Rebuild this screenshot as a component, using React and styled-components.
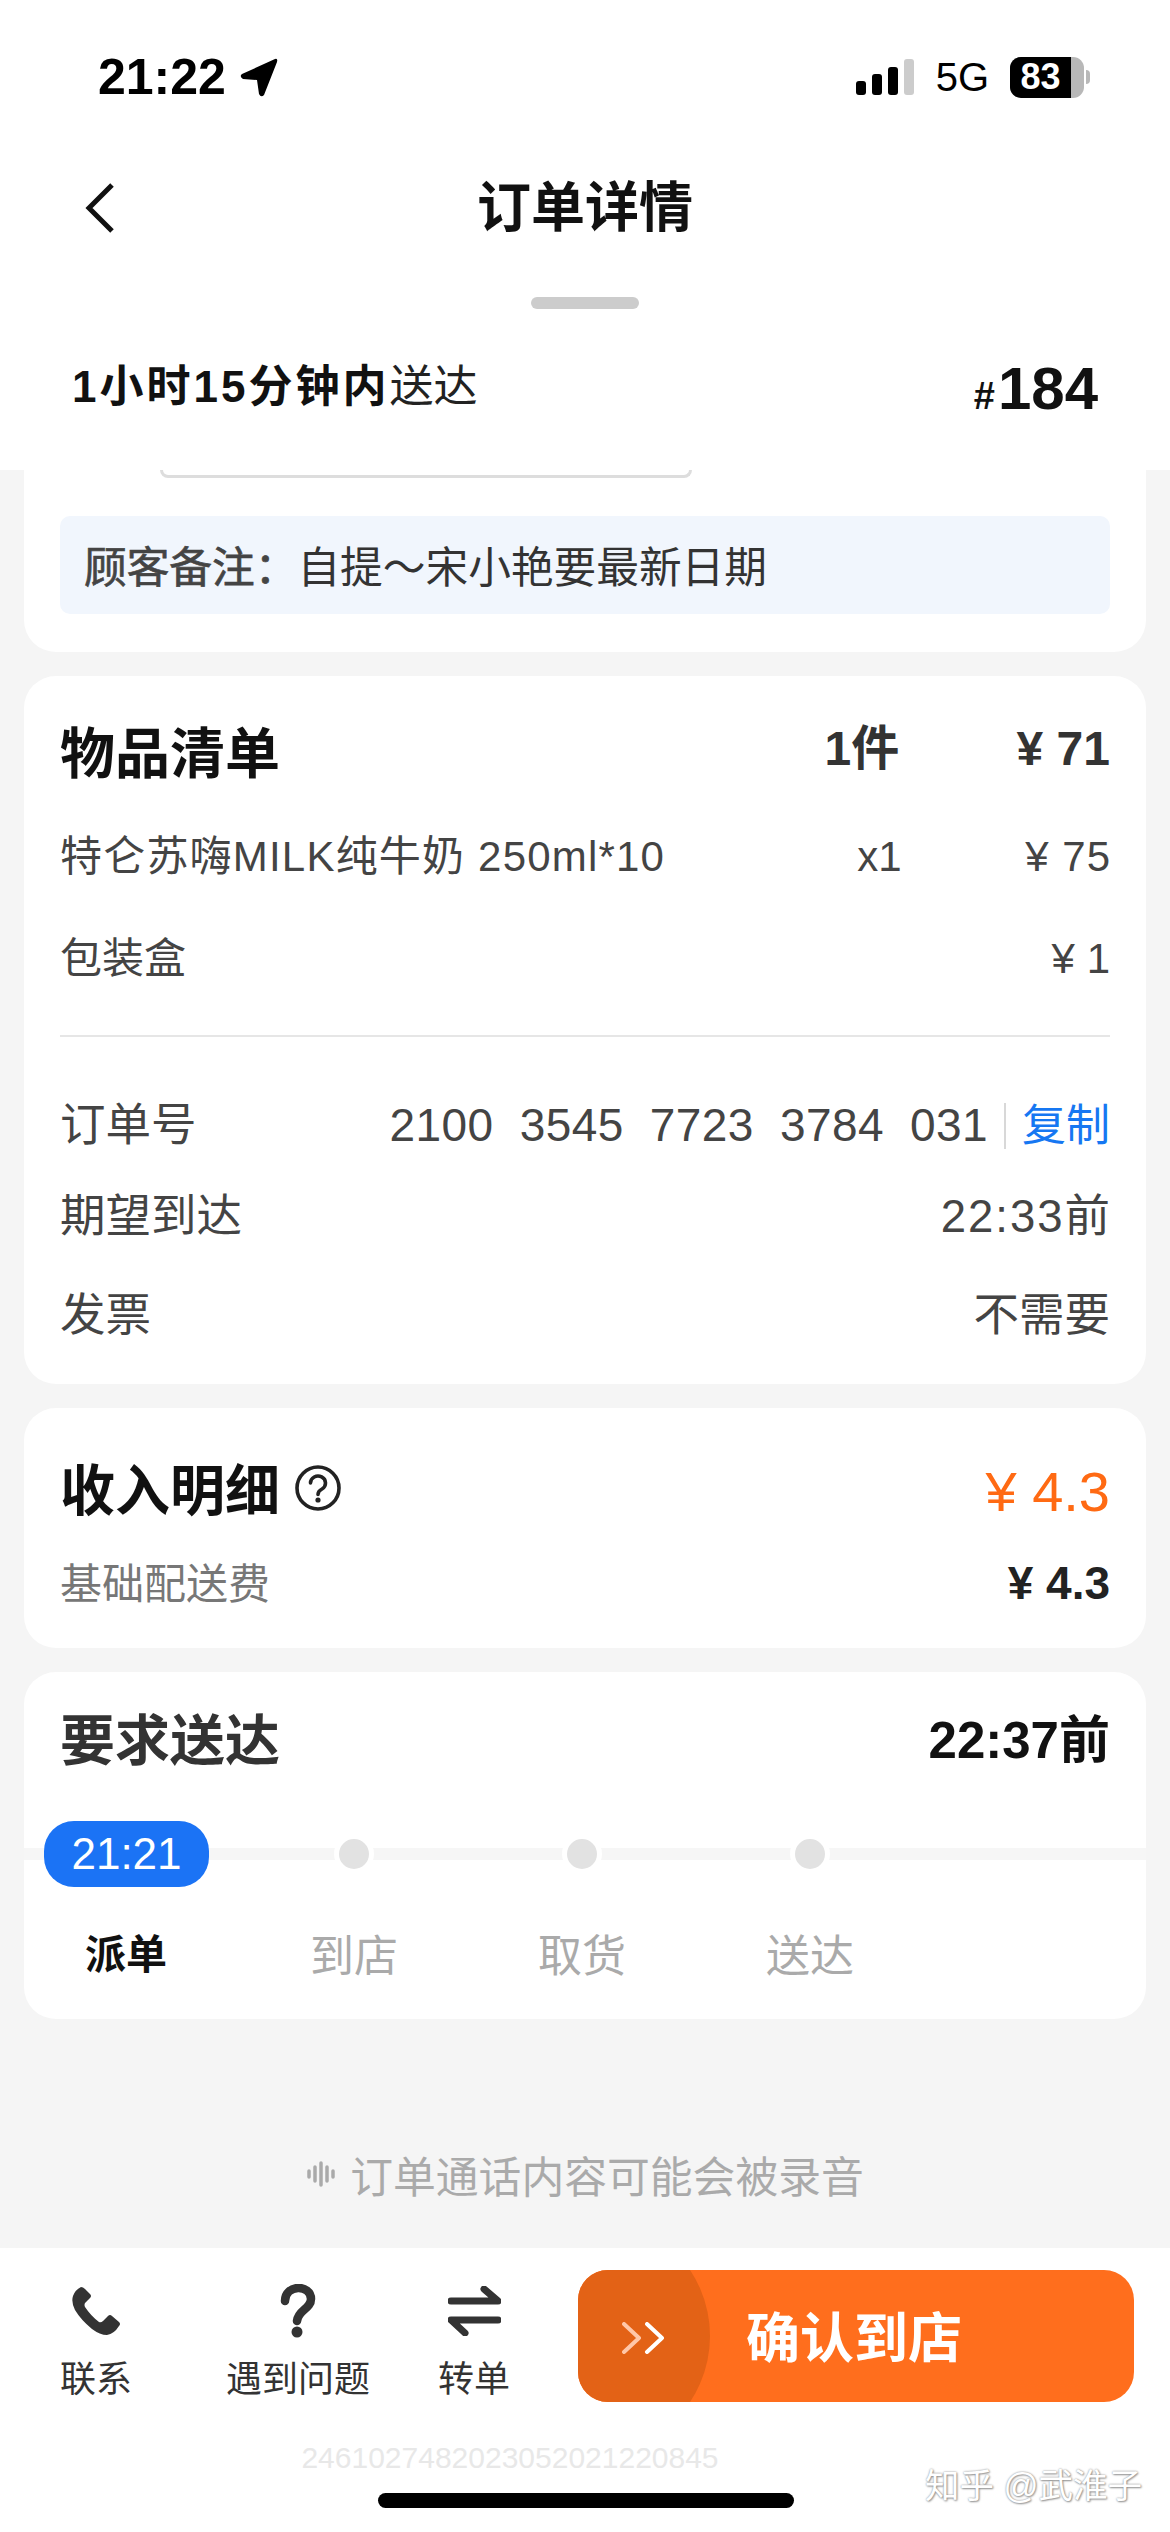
import React from "react";
import styled, { createGlobalStyle } from "styled-components";

const GlobalStyle = createGlobalStyle`
  html, body {
    margin: 0;
    padding: 0;
    background: #f5f5f5;
  }
  * {
    box-sizing: border-box;
  }
`;

const FONT = `"Liberation Sans", "Noto Sans CJK SC", sans-serif`;

const Page = styled.div`
  width: 1170px;
  height: 2532px;
  display: flex;
  flex-direction: column;
  overflow: hidden;
  position: relative;
  background: #f5f5f5;
  font-family: ${FONT};
  color: #333;
`;

const Top = styled.header`
  height: 470px;
  background: #fff;
  flex-shrink: 0;
  display: flex;
  flex-direction: column;
`;

const StatusBar = styled.div`
  height: 152px;
  padding: 52px 80px 0 98px;
  display: flex;
  justify-content: space-between;
  align-items: flex-start;
`;
const Clock = styled.div`
  display: flex;
  align-items: center;
  gap: 14px;
  height: 50px;
  font-size: 50px;
  font-weight: 700;
  color: #000;
`;
const StatusIcons = styled.div`
  display: flex;
  align-items: center;
  height: 50px;
`;
const Signal = styled.div`
  display: flex;
  align-items: flex-end;
  gap: 6px;
  height: 36px;
  margin-right: 22px;
`;
const SignalBar = styled.span`
  width: 10px;
  height: ${p => p.$h}px;
  border-radius: 3px;
  background: ${p => (p.$off ? "#ccc" : "#000")};
`;
const Network = styled.span`
  font-size: 40px;
  color: #000;
  margin-right: 21px;
`;
const Battery = styled.div`
  width: 74px;
  height: 41px;
  border-radius: 11px;
  overflow: hidden;
  display: flex;
  background: #b8b8b8;
`;
const BatteryFill = styled.div`
  width: 61px;
  background: #000;
  color: #fff;
  font-size: 36px;
  font-weight: 700;
  display: flex;
  align-items: center;
  justify-content: center;
`;
const BatteryCap = styled.span`
  width: 4px;
  height: 14px;
  margin-left: 2px;
  background: #b8b8b8;
  border-radius: 0 4px 4px 0;
`;

const NavBar = styled.div`
  height: 108px;
  position: relative;
  display: flex;
  align-items: center;
  justify-content: center;
`;
const NavTitle = styled.h1`
  margin: -6px 0 0;
  font-size: 54px;
  font-weight: 700;
  color: #111;
`;
const BackButton = styled.div`
  position: absolute;
  left: 85px;
  top: 31px;
  line-height: 0;
`;

const Handle = styled.div`
  width: 108px;
  height: 12px;
  border-radius: 6px;
  background: #ccc;
  margin: 37px auto 0;
`;
const EtaRow = styled.div`
  display: flex;
  justify-content: space-between;
  align-items: center;
  padding: 33px 72px 0;
`;
const Eta = styled.div`
  font-size: 44px;
  font-weight: 400;
  color: #222;
  b {
    font-weight: 700;
    color: #111;
    letter-spacing: 3px;
  }
`;
const OrderNo = styled.div`
  margin-top: 12px;
  font-size: 60px;
  font-weight: 700;
  color: #111;
  display: flex;
  align-items: baseline;
  gap: 3px;
  small {
    font-size: 38px;
  }
`;

const Content = styled.main`
  flex: 1;
  padding: 0 24px;
  display: flex;
  flex-direction: column;
  gap: 24px;
`;
const Card = styled.section`
  background: #fff;
  border-radius: ${p => (p.$clipped ? "0 0 32px 32px" : "32px")};
  padding: 0 36px;
  height: ${p => p.$h}px;
  display: flex;
  flex-direction: column;
  flex-shrink: 0;
`;
const ClippedBox = styled.div`
  width: 532px;
  height: 8px;
  margin-left: 100px;
  border: 3px solid #ddd;
  border-top: 0;
  border-radius: 0 0 10px 10px;
`;
const RemarkBox = styled.div`
  margin-top: 38px;
  height: 98px;
  background: #f1f6fd;
  border-radius: 10px;
  padding: 0 24px 3px;
  display: flex;
  align-items: center;
  font-size: 42.7px;
  color: #333;
  b {
    font-weight: 400;
    color: #444;
    -webkit-text-stroke: 0.7px #444;
  }
`;

const TitleRow = styled.div`
  display: flex;
  align-items: center;
  justify-content: space-between;
  height: 60px;
  margin-top: ${p => p.$top}px;
`;
const CardTitle = styled.h2`
  margin: 0;
  font-size: 55px;
  font-weight: 700;
  color: ${p => (p.$soft ? "#333" : "#111")};
  display: flex;
  align-items: center;
  gap: 15px;
  svg {
    margin-top: 4px;
  }
`;
const GoodsTotals = styled.div`
  display: flex;
  align-items: baseline;
  margin-bottom: 10px;
  font-size: 48px;
  font-weight: 700;
  color: #333;
`;
const GoodsCount = styled.span`
  width: 192px;
`;
const Row = styled.div`
  display: flex;
  align-items: baseline;
  justify-content: space-between;
  height: 60px;
  margin-top: ${p => p.$top}px;
  font-size: ${p => p.$size || 45.5}px;
  color: ${p => p.$color || "#444"};
`;
const GoodsName = styled.span`
  letter-spacing: 1.2px;
`;
const Qty = styled.span`
  margin-left: auto;
  width: 168px;
`;
const Price = styled.span`
  letter-spacing: 1px;
  margin-right: -1px;
`;
const Divider = styled.hr`
  border: 0;
  height: 2px;
  margin: 51px 0 0;
  background: #e6e6e6;
`;
const OrderNumber = styled.div`
  display: flex;
  align-items: baseline;
  font-size: 46px;
  letter-spacing: 0.4px;
  word-spacing: 13px;
`;
const Copy = styled.span`
  color: #1677f2;
  font-size: 44px;
  border-left: 2px solid #d8d8d8;
  margin-left: 16px;
  padding-left: 16px;
  letter-spacing: 0;
  line-height: 46px;
`;
const SpacedValue = styled.span`
  letter-spacing: 2px;
  margin-right: -2px;
`;
const Money = styled.span`
  margin-top: 10px;
  font-size: 56px;
  color: #ff6a13;
`;
const BoldValue = styled.span`
  font-weight: 700;
  color: #222;
  font-size: 46px;
`;
const RequireTime = styled.span`
  font-size: 51px;
  font-weight: 700;
  color: #111;
`;

const Timeline = styled.div`
  position: relative;
  height: 120px;
  margin: 28px -36px 0;
  display: flex;
  align-items: center;
  padding-left: 20px;
`;
const TrackLine = styled.div`
  position: absolute;
  left: 0;
  right: 0;
  top: 54px;
  height: 12px;
  background: #f6f6f6;
`;
const TimePill = styled.div`
  position: relative;
  width: 165px;
  height: 66px;
  border-radius: 30px;
  background: #1b73f5;
  color: #fff;
  font-size: 44px;
  display: flex;
  align-items: center;
  justify-content: center;
`;
const Dot = styled.span`
  position: relative;
  width: 40px;
  height: 40px;
  margin-left: ${p => p.$left}px;
  border-radius: 50%;
  background: #e2e2e2;
  border: 5px solid #fff;
`;
const Steps = styled.div`
  display: flex;
  margin: 7px 0 0 -48px;
`;
const Step = styled.div`
  width: 228px;
  text-align: center;
  font-size: ${p => (p.$active ? 41 : 44)}px;
  font-weight: ${p => (p.$active ? 700 : 400)};
  color: ${p => (p.$active ? "#111" : "#aaa")};
  flex-shrink: 0;
`;

const RecordingNote = styled.div`
  margin-top: 100px;
  display: flex;
  align-items: center;
  justify-content: center;
  gap: 14px;
  font-size: 42.8px;
  color: #aaa;
`;

const BottomBar = styled.footer`
  height: 284px;
  flex-shrink: 0;
  background: #fff;
  position: relative;
`;
const Actions = styled.div`
  display: flex;
  align-items: flex-start;
  padding-top: 22px;
`;
const Action = styled.div`
  display: flex;
  flex-direction: column;
  align-items: center;
  width: ${p => p.$w}px;
  flex-shrink: 0;
  font-size: 36px;
  color: #333;
`;
const ActionIcon = styled.div`
  height: 60px;
  margin: 11px 0 9px;
  display: flex;
  align-items: center;
  line-height: 0;
`;
const ConfirmButton = styled.div`
  position: relative;
  margin-left: 34px;
  width: 556px;
  height: 132px;
  border-radius: 30px;
  background: #ff6e1d;
  overflow: hidden;
  display: flex;
  align-items: center;
  padding: 0 0 4px 168px;
  color: #fff;
  font-size: 54px;
  font-weight: 700;
`;
const SlideKnob = styled.div`
  position: absolute;
  left: -128px;
  top: -58px;
  width: 260px;
  height: 248px;
  border-radius: 50%;
  background: #e36216;
`;
const Chevrons = styled.div`
  position: absolute;
  left: 44px;
  top: 52px;
  line-height: 0;
`;
const ConfirmLabel = styled.span`
  position: relative;
`;
const TraceId = styled.div`
  text-align: center;
  width: 420px;
  margin: 39px 0 0 300px;
  font-size: 30px;
  color: #e8e8e8;
`;
const HomeBar = styled.div`
  position: absolute;
  left: 378px;
  bottom: 24px;
  width: 416px;
  height: 15px;
  border-radius: 8px;
  background: #000;
`;
const Watermark = styled.div`
  position: absolute;
  right: 28px;
  bottom: 24px;
  font-size: 34.5px;
  color: #fff;
  text-shadow: 0 0 2px #888, 1px 1px 2px #999;
`;

function App() {
  return (
    <Page>
      <GlobalStyle />
      <Top>
        <StatusBar>
          <Clock>
            21:22
            <svg width="38" height="39" viewBox="0 0 38 39">
              <path d="M35 1 Q38 0 37 4 L24 37 Q21 40 19 36 L17 22 L3 21 Q-1 18 2 16 Z" fill="#000" />
            </svg>
          </Clock>
          <StatusIcons>
            <Signal>
              <SignalBar $h={14} />
              <SignalBar $h={21} />
              <SignalBar $h={28} />
              <SignalBar $h={36} $off />
            </Signal>
            <Network>5G</Network>
            <Battery>
              <BatteryFill>83</BatteryFill>
            </Battery>
            <BatteryCap />
          </StatusIcons>
        </StatusBar>
        <NavBar>
          <BackButton>
            <svg width="30" height="50" viewBox="0 0 30 50">
              <path d="M27 2 L4 25 L27 48" fill="none" stroke="#111" strokeWidth="5" />
            </svg>
          </BackButton>
          <NavTitle>订单详情</NavTitle>
        </NavBar>
        <Handle />
        <EtaRow>
          <Eta>
            <b>1小时15分钟内</b>送达
          </Eta>
          <OrderNo>
            <small>#</small>184
          </OrderNo>
        </EtaRow>
      </Top>
      <Content>
        <Card $clipped $h={182}>
          <ClippedBox />
          <RemarkBox>
            <b>顾客备注：</b>自提～宋小艳要最新日期
          </RemarkBox>
        </Card>

        <Card $h={708}>
          <TitleRow $top={43}>
            <CardTitle>物品清单</CardTitle>
            <GoodsTotals>
              <GoodsCount>1件</GoodsCount>
              <span>¥ 71</span>
            </GoodsTotals>
          </TitleRow>
          <Row $top={43} $size={42}>
            <GoodsName>特仑苏嗨MILK纯牛奶 250ml*10</GoodsName>
            <Qty>x1</Qty>
            <Price>¥ 75</Price>
          </Row>
          <Row $top={42} $size={42}>
            <span>包装盒</span>
            <span>¥ 1</span>
          </Row>
          <Divider />
          <Row $top={51}>
            <span>订单号</span>
            <OrderNumber>
              2100 3545 7723 3784 031
              <Copy>复制</Copy>
            </OrderNumber>
          </Row>
          <Row $top={31}>
            <span>期望到达</span>
            <SpacedValue>22:33前</SpacedValue>
          </Row>
          <Row $top={39}>
            <span>发票</span>
            <span>不需要</span>
          </Row>
        </Card>

        <Card $h={240}>
          <TitleRow $top={48}>
            <CardTitle>
              收入明细
              <svg width="46" height="46" viewBox="0 0 46 46">
                <circle cx="23" cy="23" r="21" fill="none" stroke="#222" strokeWidth="3.6" />
                <path d="M15.5 18 a7.5 7 0 1 1 11.5 6 q-4 2-4 5.5" fill="none" stroke="#222" strokeWidth="3.6" strokeLinecap="round" />
                <circle cx="23" cy="35" r="2.6" fill="#222" />
              </svg>
            </CardTitle>
            <Money>¥ 4.3</Money>
          </TitleRow>
          <Row $top={34} $size={42} $color="#777">
            <span>基础配送费</span>
            <BoldValue>¥ 4.3</BoldValue>
          </Row>
        </Card>

        <Card $h={347}>
          <TitleRow $top={34}>
            <CardTitle $soft>要求送达</CardTitle>
            <RequireTime>22:37前</RequireTime>
          </TitleRow>
          <Timeline>
            <TrackLine />
            <TimePill>21:21</TimePill>
            <Dot $left={125} />
            <Dot $left={188} />
            <Dot $left={188} />
          </Timeline>
          <Steps>
            <Step $active>派单</Step>
            <Step>到店</Step>
            <Step>取货</Step>
            <Step>送达</Step>
          </Steps>
        </Card>

        <RecordingNote>
          <svg width="30" height="26" viewBox="0 0 30 26">
            <path d="M3 10v6M9 6v14M15 2v22M21 6v14M27 10v6" stroke="#aaa" strokeWidth="3.5" strokeLinecap="round" />
          </svg>
          订单通话内容可能会被录音
        </RecordingNote>
      </Content>
      <BottomBar>
        <Actions>
          <Action $w={192}>
            <ActionIcon>
              <svg width="48" height="48" viewBox="0 0 48 48">
                <path
                  d="M9 0 Q11 0 13 2 L18 7 Q20 9 18 11 L13 16 Q12 18 13 20 Q19 29 27 35 Q29 36 31 34 L36 29 Q38 27 40 29 L47 35 Q49 37 47 39 Q42 47 35 48 Q28 48 20 42 Q9 33 3 23 Q-1 15 1 9 Q3 3 9 0 Z"
                  fill="#333"
                />
              </svg>
            </ActionIcon>
            联系
          </Action>
          <Action $w={212}>
            <ActionIcon>
              <svg width="36" height="54" viewBox="0 0 36 54">
                <path d="M5 17 C5 0 31 0 31 15 C31 25 18 26 17 37" fill="none" stroke="#333" strokeWidth="8.5" strokeLinecap="round" />
                <circle cx="17" cy="48" r="5.5" fill="#333" />
              </svg>
            </ActionIcon>
            遇到问题
          </Action>
          <Action $w={140}>
            <ActionIcon>
              <svg width="53" height="50" viewBox="0 0 53 50">
                <path d="M3 15 H50 L36 3" fill="none" stroke="#333" strokeWidth="7" strokeLinecap="round" strokeLinejoin="round" />
                <path d="M50 34 H3 L17 47" fill="none" stroke="#333" strokeWidth="7" strokeLinecap="round" strokeLinejoin="round" />
              </svg>
            </ActionIcon>
            转单
          </Action>
          <ConfirmButton>
            <SlideKnob />
            <Chevrons>
              <svg width="43" height="32" viewBox="0 0 43 32">
                <path d="M2 2 L17 16 L2 30" fill="none" stroke="#ffc7a8" strokeWidth="4" strokeLinecap="round" strokeLinejoin="round" />
                <path d="M25 2 L40 16 L25 30" fill="none" stroke="#fff" strokeWidth="4" strokeLinecap="round" strokeLinejoin="round" />
              </svg>
            </Chevrons>
            <ConfirmLabel>确认到店</ConfirmLabel>
          </ConfirmButton>
        </Actions>
        <TraceId>2461027482023052021220845</TraceId>
        <Watermark>知乎 @武淮子</Watermark>
        <HomeBar />
      </BottomBar>
    </Page>
  );
}

export default App;
